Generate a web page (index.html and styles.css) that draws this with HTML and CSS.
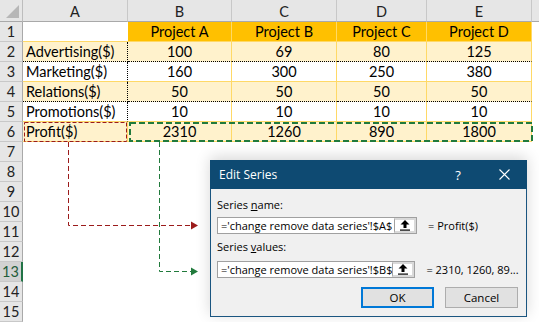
FILE: index.html
```html
<!DOCTYPE html>
<html>
<head>
<meta charset="utf-8">
<link rel="stylesheet" href="styles.css">
</head>
<body>
<div class="sheet">
  <div class="corner"></div>
  <div class="colhead">A</div>
  <div class="colhead">B</div>
  <div class="colhead">C</div>
  <div class="colhead">D</div>
  <div class="colhead">E</div>
  <div class="colhead rest"></div>

  <div class="rowhead">1</div>
  <div class="cell c-a r1"></div>
  <div class="cell c-n hdr">Project A</div>
  <div class="cell c-n hdr">Project B</div>
  <div class="cell c-n hdr">Project C</div>
  <div class="cell c-n hdr">Project D</div>
  <div class="cell c-f"></div>

  <div class="rowhead">2</div>
  <div class="cell c-a band dot-b">Advertising($)</div>
  <div class="cell c-n band dot-b">100</div>
  <div class="cell c-n band dot-b">69</div>
  <div class="cell c-n band dot-b">80</div>
  <div class="cell c-n band dot-b">125</div>
  <div class="cell c-f"></div>

  <div class="rowhead">3</div>
  <div class="cell c-a">Marketing($)</div>
  <div class="cell c-n">160</div>
  <div class="cell c-n">300</div>
  <div class="cell c-n">250</div>
  <div class="cell c-n">380</div>
  <div class="cell c-f"></div>

  <div class="rowhead">4</div>
  <div class="cell c-a band dot-b">Relations($)</div>
  <div class="cell c-n band dot-b">50</div>
  <div class="cell c-n band dot-b">50</div>
  <div class="cell c-n band dot-b">50</div>
  <div class="cell c-n band dot-b">50</div>
  <div class="cell c-f"></div>

  <div class="rowhead">5</div>
  <div class="cell c-a">Promotions($)</div>
  <div class="cell c-n">10</div>
  <div class="cell c-n">10</div>
  <div class="cell c-n">10</div>
  <div class="cell c-n">10</div>
  <div class="cell c-f"></div>

  <div class="rowhead">6</div>
  <div class="cell c-a band r6">Profit($)</div>
  <div class="cell c-n band">2310</div>
  <div class="cell c-n band">1260</div>
  <div class="cell c-n band">890</div>
  <div class="cell c-n band">1800</div>
  <div class="cell c-f"></div>

  <div class="rowhead">7</div><div class="empty"></div>
  <div class="rowhead">8</div><div class="empty"></div>
  <div class="rowhead">9</div><div class="empty"></div>
  <div class="rowhead">10</div><div class="empty"></div>
  <div class="rowhead">11</div><div class="empty"></div>
  <div class="rowhead">12</div><div class="empty"></div>
  <div class="rowhead selected">13</div><div class="empty"></div>
  <div class="rowhead">14</div><div class="empty"></div>
  <div class="rowhead">15</div><div class="empty"></div>
</div>

<svg class="overlay" width="539" height="322" viewBox="0 0 539 322">
  <rect x="24.5" y="122.5" width="102" height="19" fill="none" stroke="#9b1b1b" stroke-width="1" stroke-dasharray="4 2"/>
  <rect x="130" y="123" width="402" height="18" fill="none" stroke="#217a3c" stroke-width="2" stroke-dasharray="6 3"/>
  <polyline points="68.5,142 68.5,225.5 192,225.5" fill="none" stroke="#9b1b1b" stroke-width="1" stroke-dasharray="5 3"/>
  <polygon points="191,221.5 198,225.5 191,229.5" fill="#9b1b1b"/>
  <polyline points="159.5,142 159.5,271.5 192,271.5" fill="none" stroke="#217a3c" stroke-width="1" stroke-dasharray="5 3"/>
  <polygon points="191,267.5 198,271.5 191,275.5" fill="#217a3c"/>
</svg>

<div class="dialog">
  <div class="titlebar">
    <span class="title">Edit Series</span>
    <span class="cap help">?</span>
    <span class="cap close">
      <svg width="11" height="11" viewBox="0 0 11 11"><path d="M0.5 0.5 L10.5 10.5 M10.5 0.5 L0.5 10.5" stroke="#fff" stroke-width="1.1" fill="none"/></svg>
    </span>
  </div>
  <div class="dialog-body">
    <div class="label">Series <u>n</u>ame:</div>
    <div class="field-row">
      <div class="ref-box">
        <span class="ref-text">='change remove data series'!$A$</span>
        <span class="ref-btn">
          <svg width="10" height="11" viewBox="0 0 10 11"><polygon points="5,0 9.5,4.5 6.5,4.5 6.5,8 3.5,8 3.5,4.5 0.5,4.5" fill="#000"/><rect x="0" y="9.5" width="10" height="1.2" fill="#000"/></svg>
        </span>
      </div>
      <span class="preview">= Profit($)</span>
    </div>
    <div class="label label-values">Series <u>v</u>alues:</div>
    <div class="field-row">
      <div class="ref-box">
        <span class="ref-text">='change remove data series'!$B$</span>
        <span class="ref-btn">
          <svg width="10" height="11" viewBox="0 0 10 11"><polygon points="5,0 9.5,4.5 6.5,4.5 6.5,8 3.5,8 3.5,4.5 0.5,4.5" fill="#000"/><rect x="0" y="9.5" width="10" height="1.2" fill="#000"/></svg>
        </span>
      </div>
      <span class="preview">= 2310, 1260, 89...</span>
    </div>
    <div class="buttons">
      <button class="btn ok">OK</button>
      <button class="btn">Cancel</button>
    </div>
  </div>
</div>
</body>
</html>
```

FILE: styles.css
```css
* { box-sizing: border-box; }

body {
  margin: 0;
  width: 539px;
  height: 322px;
  overflow: hidden;
  position: relative;
  background: #fff;
  font-family: Lato, "Open Sans", sans-serif;
  color: #000;
}

.sheet {
  display: grid;
  grid-template-columns: 23px 105px 104px 105px 90px 105px 1fr;
  grid-template-rows: 22px repeat(15, 20px);
  font-size: 14.5px;
}

.corner {
  background: #e6e6e6;
  border-right: 1px solid #bdbdbd;
  border-bottom: 1px solid #a9a9a9;
  position: relative;
}
.corner::after {
  content: "";
  position: absolute;
  right: 3px;
  bottom: 3px;
  width: 0;
  height: 0;
  border-left: 13px solid transparent;
  border-bottom: 13px solid #b7b7b7;
}

.colhead {
  background: #e6e6e6;
  border-right: 1px solid #c8c8c8;
  border-bottom: 1px solid #a9a9a9;
  display: flex;
  align-items: center;
  justify-content: center;
  color: #222;
  padding-top: 1px;
}
.colhead.rest { border-right: none; }

.rowhead {
  background: #e6e6e6;
  border-right: 1px solid #a9a9a9;
  border-bottom: 1px solid #c8c8c8;
  display: flex;
  align-items: center;
  justify-content: center;
  color: #222;
}
.rowhead.selected {
  background: #d2d2d2;
  border-right: 2px solid #217346;
  color: #1f5c3a;
}

.cell {
  display: flex;
  align-items: center;
  background: #fff;
  border-bottom: 1px solid #ffd966;
  border-right: 1px solid #ffd966;
  white-space: nowrap;
}
.c-a {
  padding-left: 3px;
  border-right: 1px dotted #000;
}
.c-a.r1 { border-right: none; }
.c-a.r6 { border-right: 1px solid #ffd966; }
.c-n { justify-content: center; }
.c-f { border: none; background: #fff; }
.hdr { background: #ffc000; }
.band { background: #fff2cc; }
.dot-b { border-bottom: 1px dotted #000; }

.empty {
  grid-column: span 6;
  background: #fff;
}

.overlay {
  position: absolute;
  left: 0;
  top: 0;
  pointer-events: none;
}

/* dialog */
.dialog {
  position: absolute;
  left: 210px;
  top: 160px;
  width: 317px;
  height: 157px;
  background: #f0f0f0;
  border: 1px solid #1a5580;
  box-shadow: 0 -3px 14px rgba(0, 0, 0, 0.16);
  font-family: "Open Sans", "Noto Sans", sans-serif;
  font-size: 11px;
  color: #000;
}

.titlebar {
  height: 29px;
  background: #0e4a72;
  color: #fff;
  display: flex;
  align-items: center;
  margin: -1px -1px 0 -1px;
}
.title {
  padding-left: 9px;
  font-size: 12px;
  flex: 1;
}
.cap {
  width: 46px;
  height: 29px;
  display: flex;
  align-items: center;
  justify-content: center;
}
.help { font-size: 13px; }

.dialog-body {
  padding: 8px 8px 0 6px;
}

.label {
  height: 16px;
  line-height: 16px;
  margin-bottom: 4px;
}
.label-values {
  margin-top: 5px;
  margin-bottom: 6px;
}

.field-row {
  display: flex;
  align-items: center;
  height: 17px;
}

.ref-box {
  width: 200px;
  height: 17px;
  display: flex;
  background: #fff;
  border: 1px solid #a0a0a0;
}
.ref-text {
  flex: 1;
  overflow: hidden;
  white-space: nowrap;
  padding-left: 3px;
  line-height: 15px;
}
.ref-btn {
  width: 22px;
  height: 15px;
  border: 2px solid #d9d9d9;
  border-left: 1px solid #a0a0a0;
  background: #fff;
  display: flex;
  align-items: center;
  justify-content: center;
}
.ref-btn svg { margin-top: -1px; }

.preview {
  margin-left: 11px;
  white-space: nowrap;
}

.buttons {
  display: flex;
  justify-content: flex-end;
  gap: 11px;
  margin-top: 9px;
}
.btn {
  width: 73px;
  height: 21px;
  background: #e1e1e1;
  border: 1px solid #adadad;
  font-family: "Open Sans", "Noto Sans", sans-serif;
  font-size: 11.5px;
  color: #000;
  padding: 0;
}
.btn.ok {
  border: 2px solid #0078d7;
}
```
